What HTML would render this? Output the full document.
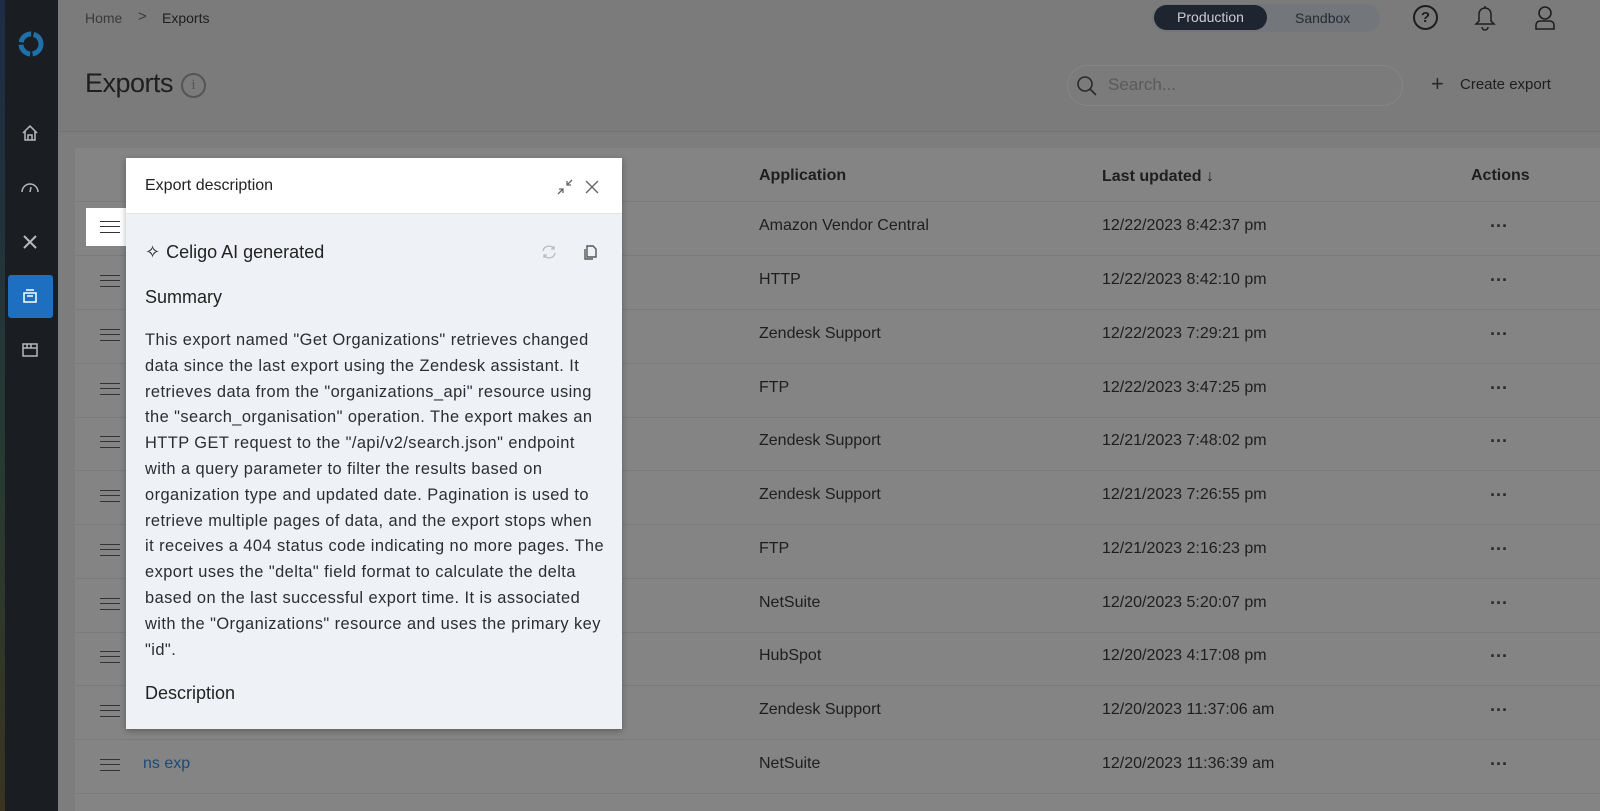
<!DOCTYPE html>
<html><head><style>
*{margin:0;padding:0;box-sizing:border-box}
body{width:1600px;height:811px;overflow:hidden;background:#7d7d7d;font-family:"Liberation Sans",sans-serif;position:relative;color:#1e1e1e}
.strip{position:absolute;left:0;top:0;width:5px;height:811px;background:linear-gradient(#1d2c45,#283a30 60%,#3a3420)}
.side{position:absolute;left:5px;top:0;width:53px;height:811px;background:#1a1e23}
.top{position:absolute;left:58px;top:0;right:0;height:132px;background:#7b7b7b;border-bottom:1px solid #747474}
.abs{position:absolute;white-space:nowrap}
.tbl{position:absolute;left:75px;top:148px;right:0;bottom:0;background:#848484}
.row{position:absolute;left:75px;right:0;height:54px;border-bottom:1px solid #7a7a7a}
.modal{position:absolute;left:126px;top:158px;width:496px;height:571px;background:#eef2f7;box-shadow:0 2px 6px rgba(0,0,0,.3)}
.mh{height:56px;background:#fff;border-bottom:1px solid #dfe3e8;position:relative}
.t{font-size:16.4px;line-height:25.8px;color:#2a2d31;position:absolute;left:19px;top:170px;white-space:nowrap;letter-spacing:0.45px}
.hb{position:absolute;left:100px;width:20px;height:12px;border-top:1.5px solid #333;border-bottom:1.5px solid #333}
.hb:after{content:"";position:absolute;left:0;top:3.5px;width:20px;height:1.5px;background:#333}
.dots{position:absolute;left:1490px;font-size:18px;color:#2a2a2a;font-weight:bold}
</style></head><body>
<div class="strip"></div>
<div class="side">
<svg class="abs" style="left:12px;top:30px" width="28" height="28" viewBox="0 0 28 28"><circle cx="14" cy="14" r="10" fill="none" stroke="#1f6fa8" stroke-width="5" stroke-dasharray="14 2.5"/></svg>
<svg class="abs" style="left:16px;top:124px" width="18" height="18" viewBox="0 0 18 18" fill="none" stroke="#b4b9be" stroke-width="1.5"><path d="M2 9L9 2l7 7M4 7v9h10V7M7 16v-5h4v5"/></svg>
<svg class="abs" style="left:15px;top:180px" width="20" height="14" viewBox="0 0 20 14" fill="none" stroke="#b4b9be" stroke-width="1.5"><path d="M2 12A8 8 0 0 1 18 12M10 12l1-5"/></svg>
<svg class="abs" style="left:16px;top:233px" width="18" height="18" viewBox="0 0 18 18" fill="none" stroke="#b4b9be" stroke-width="2"><path d="M3 15L15 3M3 3l12 12"/></svg>
<div class="abs" style="left:3px;top:275px;width:45px;height:43px;background:#1f6fc0;border-radius:3px"></div>
<svg class="abs" style="left:17px;top:287px" width="16" height="18" viewBox="0 0 16 18" fill="none" stroke="#fff" stroke-width="1.5"><path d="M2 6h12v9H2zM4 3h8M5 9h6"/></svg>
<svg class="abs" style="left:16px;top:342px" width="18" height="16" viewBox="0 0 18 16" fill="none" stroke="#b4b9be" stroke-width="1.5"><path d="M2 2h14v12H2zM2 6h14M6 2v4M10 2v4"/></svg>
</div>
<div class="top">
<div class="abs" style="left:27px;top:10px;font-size:14px;color:#3a3a3a">Home</div>
<div class="abs" style="left:80px;top:8px;font-size:15px;color:#3a3a3a">&gt;</div>
<div class="abs" style="left:104px;top:10px;font-size:14px;color:#1e1e1e">Exports</div>
<div class="abs" style="left:27px;top:68px;font-size:27px;letter-spacing:-0.5px;color:#1e1e1e">Exports</div>
<div class="abs" style="left:123px;top:73px;width:25px;height:25px;border:2px solid #555;border-radius:50%;font-size:15px;text-align:center;line-height:21px;color:#555;font-family:'Liberation Serif',serif">i</div>
<div class="abs" style="left:1094px;top:4px;width:228px;height:28px;border-radius:14px;background:#73777c"></div>
<div class="abs" style="left:1096px;top:5px;width:113px;height:25px;border-radius:13px;background:#1e2530;color:#c9ced4;font-size:14px;text-align:center;line-height:25px">Production</div>
<div class="abs" style="left:1237px;top:10px;font-size:14px;color:#262b30">Sandbox</div>
<div class="abs" style="left:1355px;top:5px;width:25px;height:25px;border:2px solid #1e1e1e;border-radius:50%;font-size:15px;font-weight:bold;text-align:center;line-height:21px">?</div>
<svg class="abs" style="left:1416px;top:5px" width="22" height="26" viewBox="0 0 22 26" fill="none" stroke="#1e1e1e" stroke-width="1.5"><path d="M11 3a6 6 0 0 1 6 6v7l3 3H2l3-3V9a6 6 0 0 1 6-6zM8 22a3 3 0 0 0 6 0M11 1v2"/></svg>
<svg class="abs" style="left:1476px;top:4px" width="22" height="26" viewBox="0 0 22 26" fill="none" stroke="#1e1e1e" stroke-width="1.6"><circle cx="11" cy="9" r="6"/><path d="M2 25v-4a4 4 0 0 1 4-4h10a4 4 0 0 1 4 4v4z"/></svg>
<div class="abs" style="left:1009px;top:65px;width:336px;height:41px;border:1px solid #858585;border-radius:21px"></div>
<svg class="abs" style="left:1018px;top:75px" width="22" height="22" viewBox="0 0 22 22" fill="none" stroke="#2a2a2a" stroke-width="1.6"><circle cx="9" cy="9" r="7"/><path d="M14 14l6 6"/></svg>
<div class="abs" style="left:1050px;top:75px;font-size:17px;color:#5a5a5a">Search...</div>
<div class="abs" style="left:1373px;top:71px;font-size:22px;color:#2a2a2a">+</div>
<div class="abs" style="left:1402px;top:76px;font-size:15px;color:#1e1e1e">Create export</div>
</div>
<div class="tbl"></div>
<div class="row" style="top:148px;height:54px"></div>
<div class="abs" style="left:759px;top:167px;font-size:16px;font-weight:bold">Application</div>
<div class="abs" style="left:1102px;top:168px;font-size:16px;font-weight:bold">Last updated <span style="font-weight:normal">↓</span></div>
<div class="abs" style="left:1471px;top:167px;font-size:16px;font-weight:bold">Actions</div>

<div class="row" style="top:202px"></div><div class="row" style="top:256px"></div><div class="row" style="top:310px"></div><div class="row" style="top:364px"></div><div class="row" style="top:417px"></div><div class="row" style="top:471px"></div><div class="row" style="top:525px"></div><div class="row" style="top:579px"></div><div class="row" style="top:632px"></div><div class="row" style="top:686px"></div><div class="row" style="top:740px"></div>
<div class="abs" style="left:86px;top:208px;width:42px;height:38px;background:#fff"></div>

<div class="hb" style="top:221px"></div><div class="hb" style="top:275px"></div><div class="hb" style="top:329px"></div><div class="hb" style="top:383px"></div><div class="hb" style="top:436px"></div><div class="hb" style="top:490px"></div><div class="hb" style="top:544px"></div><div class="hb" style="top:598px"></div><div class="hb" style="top:651px"></div><div class="hb" style="top:705px"></div><div class="hb" style="top:759px"></div>
<div class="abs" style="left:143px;top:755px;font-size:16px;color:#1d4a75">ns exp</div>

<div style="font-size:16px;color:#1e1e1e">
<div class="abs" style="left:759px;top:217px">Amazon Vendor Central</div><div class="abs" style="left:1102px;top:217px">12/22/2023 8:42:37 pm</div>
<div class="abs" style="left:759px;top:271px">HTTP</div><div class="abs" style="left:1102px;top:271px">12/22/2023 8:42:10 pm</div>
<div class="abs" style="left:759px;top:325px">Zendesk Support</div><div class="abs" style="left:1102px;top:325px">12/22/2023 7:29:21 pm</div>
<div class="abs" style="left:759px;top:379px">FTP</div><div class="abs" style="left:1102px;top:379px">12/22/2023 3:47:25 pm</div>
<div class="abs" style="left:759px;top:432px">Zendesk Support</div><div class="abs" style="left:1102px;top:432px">12/21/2023 7:48:02 pm</div>
<div class="abs" style="left:759px;top:486px">Zendesk Support</div><div class="abs" style="left:1102px;top:486px">12/21/2023 7:26:55 pm</div>
<div class="abs" style="left:759px;top:540px">FTP</div><div class="abs" style="left:1102px;top:540px">12/21/2023 2:16:23 pm</div>
<div class="abs" style="left:759px;top:594px">NetSuite</div><div class="abs" style="left:1102px;top:594px">12/20/2023 5:20:07 pm</div>
<div class="abs" style="left:759px;top:647px">HubSpot</div><div class="abs" style="left:1102px;top:647px">12/20/2023 4:17:08 pm</div>
<div class="abs" style="left:759px;top:701px">Zendesk Support</div><div class="abs" style="left:1102px;top:701px">12/20/2023 11:37:06 am</div>
<div class="abs" style="left:759px;top:755px">NetSuite</div><div class="abs" style="left:1102px;top:755px">12/20/2023 11:36:39 am</div>
</div>
<div class="dots" style="top:216px">···</div><div class="dots" style="top:270px">···</div><div class="dots" style="top:324px">···</div><div class="dots" style="top:378px">···</div><div class="dots" style="top:431px">···</div><div class="dots" style="top:485px">···</div><div class="dots" style="top:539px">···</div><div class="dots" style="top:593px">···</div><div class="dots" style="top:646px">···</div><div class="dots" style="top:700px">···</div><div class="dots" style="top:754px">···</div>

<div class="modal">
<div class="mh">
<div class="abs" style="left:19px;top:19px;font-size:16px;color:#222">Export description</div>
<svg class="abs" style="left:430px;top:20px" width="18" height="18" viewBox="0 0 18 18" fill="none" stroke="#666" stroke-width="1.3"><path d="M2 16l5-5M3 11h4v4M16 2l-5 5M11 3v4h4"/></svg>
<svg class="abs" style="left:459px;top:22px" width="14" height="14" viewBox="0 0 14 14" fill="none" stroke="#666" stroke-width="1.4"><path d="M1 1l12 12M13 1L1 13"/></svg>
</div>
<div class="abs" style="left:19px;top:84px;font-size:18px;color:#222">✧<span style="margin-left:6px">Celigo AI generated</span></div>
<svg class="abs" style="left:415px;top:86px" width="16" height="16" viewBox="0 0 16 16" fill="none" stroke="#bbb" stroke-width="1.3"><path d="M2 7a6 6 0 0 1 11-2M14 9a6 6 0 0 1-11 2M13 2v3h-3M3 14v-3h3"/></svg>
<svg class="abs" style="left:456px;top:86px" width="16" height="17" viewBox="0 0 16 17" fill="none" stroke="#555" stroke-width="1.4"><path d="M5 2h6l3 3v8H5zM3 5v10h8"/></svg>
<div class="abs" style="left:19px;top:129px;font-size:18px;color:#222">Summary</div>
<div class="t">This export named "Get Organizations" retrieves changed<br>data since the last export using the Zendesk assistant. It<br>retrieves data from the "organizations_api" resource using<br>the "search_organisation" operation. The export makes an<br>HTTP GET request to the "/api/v2/search.json" endpoint<br>with a query parameter to filter the results based on<br>organization type and updated date. Pagination is used to<br>retrieve multiple pages of data, and the export stops when<br>it receives a 404 status code indicating no more pages. The<br>export uses the "delta" field format to calculate the delta<br>based on the last successful export time. It is associated<br>with the "Organizations" resource and uses the primary key<br>"id".</div>
<div class="abs" style="left:19px;top:525px;font-size:18px;color:#222">Description</div>
</div>
</body></html>
